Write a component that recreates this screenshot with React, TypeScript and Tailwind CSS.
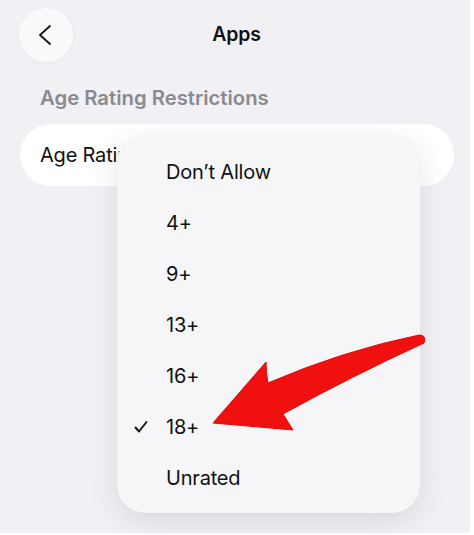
const OPTIONS = ["Don’t Allow", "4+", "9+", "13+", "16+", "18+", "Unrated"];
const SELECTED = "18+";

export default function App() {
  return (
    <div
      className="relative w-[474px] h-[535px] bg-white overflow-hidden"
      style={{ fontFamily: "Inter, 'Noto Sans', sans-serif" }}
    >
      <div className="w-[470px] h-[533px] bg-[#f0f0f5] px-[20px] pt-[8px]">
        {/* Nav bar */}
        <div className="grid grid-cols-[54px_1fr_54px] items-center -ml-px">
          <button className="w-[54px] h-[54px] rounded-full bg-[#fafafc] flex items-center justify-center shadow-[0_1px_4px_rgba(0,0,0,0.04)]">
            <svg width="16" height="22" viewBox="0 0 16 22" className="-ml-[2px]">
              <polyline points="13,2 3,11 13,20" fill="none" stroke="#111" strokeWidth="1.8" strokeLinecap="round" strokeLinejoin="round" />
            </svg>
          </button>
          <h1 className="text-center text-[19.5px] font-semibold text-[#111] tracking-[-0.2px] pl-[4px]">Apps</h1>
          <div />
        </div>

        {/* Section */}
        <p className="mt-[24px] pl-[20px] text-[20.3px] leading-[24px] font-semibold text-[#8a8a8f]">
          Age Rating Restrictions
        </p>
        <div className="mt-[14px] h-[62px] w-[434px] rounded-full bg-white flex items-center px-[20px]">
          <span className="text-[20px] text-[#111] tracking-[-0.2px]">Age Rating</span>
        </div>
      </div>

      {/* Dropdown menu */}
      <div className="absolute left-[117px] top-[135px] w-[303px] h-[378px] rounded-[28px] bg-[#f6f6f9] py-[11px] shadow-[0_8px_30px_rgba(0,0,0,0.10)]">
        {OPTIONS.map((opt) => (
          <div key={opt} className="relative h-[51px] flex items-center pl-[49px]">
            {opt === SELECTED && (
              <svg className="absolute left-[17px] top-[19px]" width="14" height="14" viewBox="0 0 14 14">
                <polyline points="1.5,7.5 5,11.5 12.5,2" fill="none" stroke="#111" strokeWidth="1.9" strokeLinecap="round" strokeLinejoin="round" />
              </svg>
            )}
            <span className="text-[20px] text-[#111] tracking-[-0.2px]">{opt}</span>
          </div>
        ))}
      </div>

      {/* Red annotation arrow */}
      <svg className="absolute inset-0 pointer-events-none" width="474" height="535" viewBox="0 0 474 535">
        <path
          d="M213 423 L266 362 Q266 373 268 383 Q342 351 419 335 Q427 335 424 343 Q352 376 283 414 L293 430 Z"
          fill="#f01010"
          stroke="#e00b0b"
          strokeWidth="1"
          strokeLinejoin="round"
        />
      </svg>
    </div>
  );
}
